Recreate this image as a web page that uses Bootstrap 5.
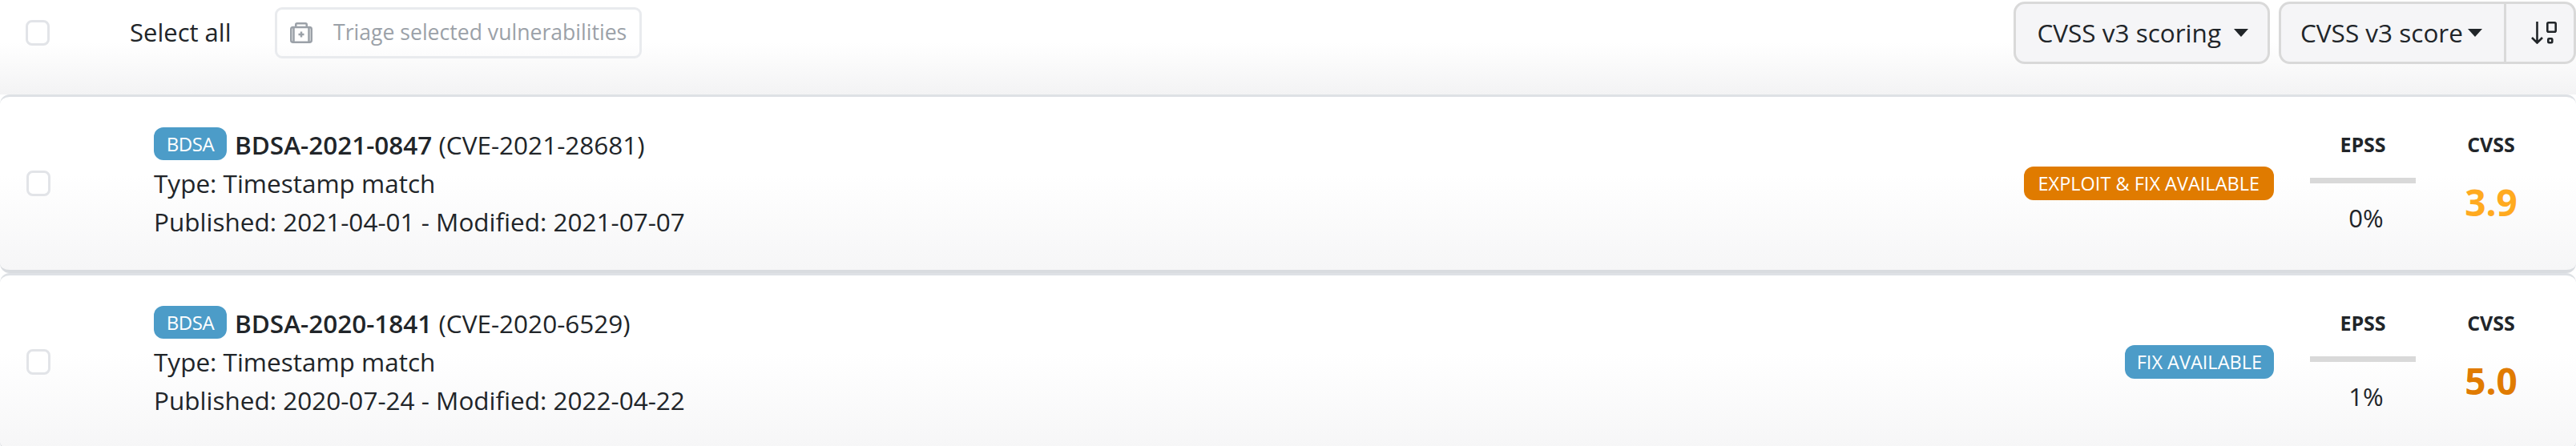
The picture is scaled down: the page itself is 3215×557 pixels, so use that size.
<!DOCTYPE html>
<html lang="en">
<head>
<meta charset="utf-8">
<title>Vulnerabilities</title>
<link href="https://cdn.jsdelivr.net/npm/bootstrap@5.3.0/dist/css/bootstrap.min.css" rel="stylesheet">
<style>
html,body{height:557px;overflow:hidden;background:#fff}
body{font-family:"Open Sans","Noto Sans",sans-serif;font-size:31.5px;color:#212529;line-height:1.2}
.bar-top{height:118px;padding:2px 0 0 32px;background:linear-gradient(#fff 45%,#f3f3f4)}
.bar-row{height:78px}
.chk{width:30px;height:32px;margin:0;border:3px solid #e2e4e8;border-radius:8px;background-color:#fff;flex:none}
.sel-all{margin-left:100px;width:181px;font-size:31px;white-space:nowrap}
.triage{width:458px;height:64px;border:3px solid #e9ebee;border-radius:9px;padding:0 0 0 16px;font-size:26.6px;color:#9ba1a8;background:transparent;white-space:nowrap}
.triage svg{width:28px;height:26px;margin-right:26px;flex:none}
.tool-btn{background:#f5f5f7;border:3px solid #d9d9d9;border-radius:14px;color:#212529;font-size:31.5px;height:78px;white-space:nowrap;padding:0 24px 0 26px}
.tool-btn.dropdown-toggle::after{border-top-width:10px;border-left-width:9px;border-right-width:9px;border-bottom:0;margin-left:16px;vertical-align:7px}
.grp-l{width:284px;border-radius:14px 0 0 14px;padding:0 0 0 24px;text-align:left}
.grp-l.dropdown-toggle::after{margin-left:6px}
.grp-r{width:87px;padding:0 0 0 31px;border-left-width:0;border-radius:0 14px 14px 0;margin-left:0!important;text-align:left}
.grp-r svg{width:32px;height:28px;display:block}
.gap-btn{margin-left:11px}
.vuln{border:0;border-top:3px solid #dee1e5;border-bottom:4px solid #d9dce0;border-radius:12px;height:223px;background:linear-gradient(#fff 45%,#f6f6f7);}
.vuln-body{height:216px;padding:0 56px 0 33px}
.info{margin-left:129px;margin-top:2px}
.tag{background:#4c9cc8;color:#fff;border-radius:12px;font-size:24px;font-weight:400;padding:0;width:91px;height:41px;line-height:41px;text-align:center;display:inline-block;margin-right:10px;letter-spacing:-.4px;vertical-align:top;margin-top:1px}
.line{height:46px;line-height:46px;font-size:31.5px;white-space:nowrap;margin-bottom:2px}
.vid{font-weight:600}
.state{border-radius:12px;color:#fff;font-size:23.500px;font-weight:400;height:42px;line-height:42px;padding:0 18px;white-space:nowrap}
.st-a{background:#e07b00}.st-f{background:#4c9cc8;padding:0 15px}
.epss{width:132px;margin:0 44px 0 45px;text-align:center}
.cvss{width:100px;text-align:center}
.hd{font-size:25px;font-weight:700;height:30px;line-height:30px;white-space:nowrap}
.meter{height:7px;background:#d9d9d9;border-radius:0;margin:27px 0 26px}
.pct{font-size:31px;height:34px;line-height:34px;padding-left:8px}
.score{font-size:46px;font-weight:700;line-height:50px;margin-top:32px;height:52px}
.sc-l{color:#ffaa1f}.sc-m{color:#e07b00}
.epss,.cvss{align-self:flex-start;margin-top:44px}
</style>
</head>
<body>
<div class="bar-top">
  <div class="bar-row d-flex align-items-center">
    <input class="form-check-input chk" type="checkbox" aria-label="Select all">
    <span class="sel-all">Select all</span>
    <div class="triage d-flex align-items-center">
      <svg viewBox="0 0 28 26" fill="none" stroke="#9ba1a8" stroke-width="2.500"><rect x="1.250" y="6" width="25.500" height="18.750" rx="2.500"/><path d="M7.250 6V2.750a1.500 1.500 0 0 1 1.500-1.500h10.500a1.500 1.500 0 0 1 1.500 1.500V6M4.500 6v18.750M23.500 6v18.750M14 11.500v7M10.500 15h7"/></svg>
      <span>Triage selected vulnerabilities</span>
    </div>
    <div class="ms-auto d-flex">
      <button type="button" class="btn tool-btn dropdown-toggle">CVSS v3 scoring</button>
      <div class="btn-group gap-btn">
        <button type="button" class="btn tool-btn grp-l dropdown-toggle">CVSS v3 score</button>
        <button type="button" class="btn tool-btn grp-r" aria-label="Sort">
          <svg viewBox="0 0 32 28" fill="none" stroke="#212529" stroke-width="2.600"><path d="M7.500 0v26.500M1 20l6.500 6.500L14 20"/><rect x="20.300" y="1.300" width="10.400" height="11.400" rx="1.500"/><rect x="21.300" y="21.300" width="5" height="5" rx="1"/></svg>
        </button>
      </div>
    </div>
  </div>
</div>

<div class="card vuln">
  <div class="vuln-body d-flex align-items-center">
    <input class="form-check-input chk" type="checkbox" aria-label="Select BDSA-2021-0847">
    <div class="info">
      <div class="line"><span class="tag">BDSA</span><span class="vid">BDSA-2021-0847</span> (CVE-2021-28681)</div>
      <div class="line">Type: Timestamp match</div>
      <div class="line">Published: 2021-04-01 - Modified: 2021-07-07</div>
    </div>
    <span class="state st-a ms-auto">EXPLOIT &amp; FIX AVAILABLE</span>
    <div class="epss"><div class="hd">EPSS</div><div class="meter"></div><div class="pct">0%</div></div>
    <div class="cvss"><div class="hd">CVSS</div><div class="score sc-l">3.9</div></div>
  </div>
</div>

<div class="card vuln">
  <div class="vuln-body d-flex align-items-center">
    <input class="form-check-input chk" type="checkbox" aria-label="Select BDSA-2020-1841">
    <div class="info">
      <div class="line"><span class="tag">BDSA</span><span class="vid">BDSA-2020-1841</span> (CVE-2020-6529)</div>
      <div class="line">Type: Timestamp match</div>
      <div class="line">Published: 2020-07-24 - Modified: 2022-04-22</div>
    </div>
    <span class="state st-f ms-auto">FIX AVAILABLE</span>
    <div class="epss"><div class="hd">EPSS</div><div class="meter"></div><div class="pct">1%</div></div>
    <div class="cvss"><div class="hd">CVSS</div><div class="score sc-m">5.0</div></div>
  </div>
</div>
<script src="https://cdn.jsdelivr.net/npm/bootstrap@5.3.0/dist/js/bootstrap.bundle.min.js"></script>
</body>
</html>
